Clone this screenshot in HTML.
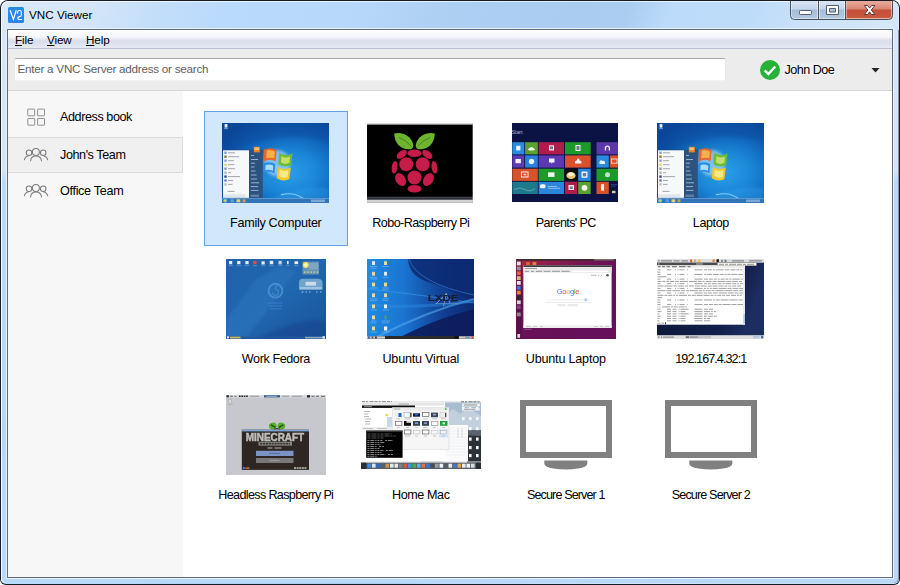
<!DOCTYPE html>
<html lang="en">
<head>
<meta charset="utf-8">
<title>VNC Viewer</title>
<style>
*{box-sizing:border-box;margin:0;padding:0}
html,body{width:900px;height:585px;overflow:hidden;background:#fff}
body{font-family:"Liberation Sans",sans-serif;color:#000;position:relative}
.abs{position:absolute}
#win{position:absolute;left:0;top:0;width:900px;height:585px;border-radius:8px 8px 6px 6px;background:#151c25;overflow:hidden}
#frame{position:absolute;left:1px;top:1px;width:898px;height:583px;border-radius:7px 7px 5px 5px;
 background:linear-gradient(112deg,#dbe9f8 0px,#d6e6f8 80px,#c3def9 150px,#badafb 210px,#b7d8fa 330px,#adcff2 420px,#a9ccf0 540px,#aacdf0 585px,#bcdbfa 625px,#bddcfa 700px,#cde2f8 760px,#d4e6f8 830px,#c9dff6 898px);
 box-shadow:inset 1px 1px 0 0 rgba(255,255,255,.7),inset -1px 0 0 0 rgba(255,255,255,.35)}
#lowframe{position:absolute;left:2px;top:30px;width:896px;height:553px;border-radius:0 0 4px 4px;
 background:linear-gradient(180deg,#d6e6f8 0,#d3e4f7 140px,#b9d9fb 152px,#b7d7f9 400px,#b9d9fb 553px)}
#lowframe:before{content:"";position:absolute;left:-1px;top:0;width:898px;height:553px;border-radius:0 0 5px 5px;box-shadow:inset 1px 0 0 0 rgba(255,255,255,.75),inset -1px 0 0 0 rgba(30,40,55,.45)}
#inner-hl{position:absolute;left:6px;top:28px;width:888px;height:551px;background:#eaf3fc;border-radius:1px}
#inner-bd{position:absolute;left:7px;top:29px;width:886px;height:549px;background:#5c6b7b}
#client{position:absolute;left:8px;top:30px;width:884px;height:547px;background:#fff;overflow:hidden}
#title{position:absolute;left:29px;top:6px;font-size:11.7px;line-height:18px;white-space:nowrap;letter-spacing:0}
#appicon{position:absolute;left:8px;top:7px;width:16px;height:16px}
#menubar{position:absolute;left:0;top:0;width:884px;height:19px;
 background:linear-gradient(180deg,#ffffff 0,#f4f6fb 7px,#e6e9f3 9px,#d9deec 11px,#dde2ef 14px,#e6eaf5 18px,#b9bfce 18px,#b9bfce 19px)}
.menu{position:absolute;top:2px;font-size:11.7px;line-height:16px;white-space:nowrap;letter-spacing:-.12px}
.menu u{text-decoration:underline;text-underline-offset:1px}
#toolbar{position:absolute;left:0;top:19px;width:884px;height:42px;background:#ececec;border-bottom:1px solid #d6d6d6}
#search{position:absolute;left:6px;top:9px;width:712px;height:23px;background:#fff;border:1px solid #e6e6e6;border-top-color:#ababab;border-bottom-color:#f2f2f2;border-radius:2.5px}
#search span{position:absolute;left:2.5px;top:2px;font-size:11.7px;line-height:16px;color:#5e5e5e;white-space:nowrap;letter-spacing:-.26px}
#sidebar{position:absolute;left:0;top:61px;width:175px;height:486px;background:#f7f7f7}
.sel{position:absolute;left:0;top:46px;width:175px;height:36px;background:#f0f0f0;border:1px solid #dadada;border-left:none}
.sbt{position:absolute;left:52px;font-size:12.6px;line-height:18px;white-space:nowrap;letter-spacing:-.42px}
.lbl{position:absolute;font-size:12.6px;line-height:18px;white-space:nowrap;text-align:center;width:145px;letter-spacing:-.42px}
</style>
</head>
<body>
<div id="win">
 <div id="frame"></div>
 <div id="lowframe"></div>
 <div id="inner-hl"></div>
 <div id="inner-bd"></div>
 <svg id="appicon" viewBox="8 7 16 16"><rect x="8" y="7" width="16" height="16" rx="1.600" fill="#2a86e8"/><path d="M10.100 10.300L13.350 19.400L16.300 10.300" fill="none" stroke="#fff" stroke-width="1.200" stroke-linejoin="miter"/><path d="M17.600 13.700V12.400A1.900 1.900 0 0 1 21.400 12.400V15Q21.400 16.300 19.600 16.600Q17.700 17 17.700 18.100Q17.800 19.500 19.700 19.500H21.900" fill="none" stroke="#fff" stroke-width="1.100"/></svg>
 <div id="title">VNC Viewer</div>
 <svg class="abs" style="left:789px;top:0" width="105" height="22" viewBox="789 0 105 22">
  <defs>
   <linearGradient id="gb" x1="0" y1="0" x2="0" y2="1"><stop offset="0" stop-color="#dbe7f5"/><stop offset=".47" stop-color="#c3d5ea"/><stop offset=".48" stop-color="#a4bcd7"/><stop offset="1" stop-color="#b4cbe4"/></linearGradient>
   <linearGradient id="gr" x1="0" y1="0" x2="0" y2="1"><stop offset="0" stop-color="#eab0a3"/><stop offset=".47" stop-color="#d98472"/><stop offset=".48" stop-color="#c5503a"/><stop offset=".85" stop-color="#c9553c"/><stop offset="1" stop-color="#d98a6a"/></linearGradient>
   <clipPath id="cc"><path d="M790.5 1V15.5Q790.5 19.5 794.5 19.5H888.5Q892.5 19.5 892.5 15.5V1Z"/></clipPath>
  </defs>
  <g clip-path="url(#cc)">
   <rect x="790" y="0" width="29" height="20" fill="url(#gb)"/>
   <rect x="819" y="0" width="27" height="20" fill="url(#gb)"/>
   <rect x="846" y="0" width="47" height="20" fill="url(#gr)"/>
  </g>
  <path d="M790.5 1V15.5Q790.5 19.5 794.5 19.5H888.5Q892.5 19.5 892.5 15.5V1" fill="none" stroke="#46525f" stroke-width="1"/>
  <path d="M791.5 1V15.5Q791.5 18.5 794.5 18.5H888.5Q891.5 18.5 891.5 15.5V1" fill="none" stroke="#fff" stroke-opacity=".45" stroke-width="1"/>
  <path d="M818.5 1V19M845.5 1V19" stroke="#46525f" stroke-width="1"/>
  <path d="M819.5 1V18.5M817.5 1V18.5M844.5 1V18.5" stroke="#fff" stroke-opacity=".5" stroke-width="1"/>
  <path d="M846.5 1V18.5" stroke="#f3c6bb" stroke-opacity=".6" stroke-width="1"/>
  <rect x="799.5" y="10.500" width="12" height="4" rx=".8" fill="#fff" stroke="#54606e" stroke-width="1"/>
  <path d="M826.5 5.500h12v9h-12zM829.500 8.500v3.500h6V8.500z" fill="#fff" fill-rule="evenodd" stroke="#54606e" stroke-width="1" stroke-linejoin="round"/>
  <path d="M864.3 5.500h3.300l2 2.600 2-2.600h3.300l-3.600 4.500 3.600 4.500h-3.300l-2-2.600-2 2.600h-3.300l3.600-4.500z" fill="#fff" stroke="#5a3a38" stroke-width="1" stroke-linejoin="round"/>
 </svg>
 <div id="client">
  <div id="menubar">
   <span class="menu" style="left:7px"><u>F</u>ile</span>
   <span class="menu" style="left:39px"><u>V</u>iew</span>
   <span class="menu" style="left:78px"><u>H</u>elp</span>
  </div>
  <div id="toolbar">
   <div id="search"><span>Enter a VNC Server address or search</span></div>
   <svg class="abs" style="left:750px;top:9px" width="134" height="24" viewBox="758 58 134 24">
    <rect x="783.500" y="63.500" width="51.500" height="11.500" fill="#f1f1f1"/><circle cx="770" cy="70" r="10" fill="#25b236"/>
    <path d="M764.700 70.400l3.700 3.700 6.900-7.600" fill="none" stroke="#fff" stroke-width="2.350" stroke-linecap="butt" stroke-linejoin="miter"/>
    <path d="M871.500 68h8l-4 4.600z" fill="#222"/>
   </svg>
   <span class="abs" id="uname" style="left:776.4px;top:12px;font-size:12.6px;line-height:18px;white-space:nowrap;letter-spacing:-.5px">John Doe</span>
  </div>
  <div id="sidebar">
   <div class="sel"></div>
   <svg class="abs" style="left:12px;top:12px" width="40" height="100" viewBox="20 103 40 100" fill="none">
    <g stroke="#919191" stroke-width="1">
     <rect x="27.800" y="109.100" width="6.900" height="6.700" rx=".4"/><rect x="37.600" y="109.100" width="6.900" height="6.700" rx=".4"/>
     <rect x="27.800" y="118.500" width="6.900" height="6.700" rx=".4"/><rect x="37.600" y="118.500" width="6.900" height="6.700" rx=".4"/>
    </g>
    <g id="ppl" stroke="#7c7c7c" stroke-width="1.050" stroke-linecap="round">
     <circle cx="35.900" cy="152" r="3.450"/>
     <circle cx="29" cy="152.800" r="2.750"/>
     <circle cx="43.200" cy="152.800" r="2.750"/>
     <path d="M30.600 161Q31 156 35.900 156Q40.800 156 41.600 161"/>
     <path d="M24.400 159.800Q25.200 156.200 28.600 155.700"/>
     <path d="M43.400 155.700Q46.800 156.200 47.700 159.800"/>
    </g>
    <use href="#ppl" y="36"/>
   </svg>
   <span class="sbt" style="top:17px">Address book</span>
   <span class="sbt" style="top:55px">John's Team</span>
   <span class="sbt" style="top:91px;letter-spacing:-.31px">Office Team</span>
  </div>
  <div class="abs" style="left:196px;top:81px;width:144px;height:135px;background:#d0e7fc;border:1px solid #62a3e5"></div>
  <svg class="abs" id="art" style="left:-8px;top:-30px" width="900" height="585" viewBox="0 0 900 585">
   <defs>
    <radialGradient id="w7bg" cx=".63" cy=".62" r=".74"><stop offset="0" stop-color="#2b9fe8"/><stop offset=".35" stop-color="#1b86d6"/><stop offset=".7" stop-color="#0e5db2"/><stop offset="1" stop-color="#0a4594"/></radialGradient>
    <filter id="b1" x="-10%" y="-10%" width="120%" height="120%"><feGaussianBlur stdDeviation=".35"/></filter>
    <filter id="b2" x="-30%" y="-30%" width="160%" height="160%"><feGaussianBlur stdDeviation="1.600"/></filter>
    <filter id="b3" x="-30%" y="-30%" width="160%" height="160%"><feGaussianBlur stdDeviation=".7"/></filter>
    <linearGradient id="fedbg" x1="0" y1="0" x2="1" y2="1"><stop offset="0" stop-color="#1e62ab"/><stop offset=".5" stop-color="#2067b0"/><stop offset="1" stop-color="#195299"/></linearGradient>
    <linearGradient id="lxbg" x1="0" y1="0" x2="1" y2="0"><stop offset="0" stop-color="#1f8be3"/><stop offset=".35" stop-color="#1a74d0"/><stop offset=".7" stop-color="#123f93"/><stop offset="1" stop-color="#0c2a72"/></linearGradient>
    <linearGradient id="ubbg" x1="0" y1="0" x2=".6" y2="1"><stop offset="0" stop-color="#b02a3c"/><stop offset=".18" stop-color="#8e1c4c"/><stop offset=".4" stop-color="#6c1257"/><stop offset="1" stop-color="#651058"/></linearGradient>
    <linearGradient id="gnbg" x1="0" y1="0" x2="1" y2=".3"><stop offset="0" stop-color="#0c1633"/><stop offset=".8" stop-color="#12204a"/><stop offset="1" stop-color="#1c2e60"/></linearGradient>
    <pattern id="termlines" x="0" y="9.200" width="88" height="4.800" patternUnits="userSpaceOnUse">
      <path d="M.5 .9h4M9.500 .9h4.500M17.500 .9h9M36 .9h37M74.500 .9h12" stroke="#9c9c9c" stroke-width=".8"/>
      <path d="M.5 3.300h3" stroke="#a8a8a8" stroke-width=".9"/>
    </pattern>
    <pattern id="termlines2" x="0" y="0" width="88" height="2.400" patternUnits="userSpaceOnUse">
      <path d="M.5 .9h3.500M10 .9h4M15 .9h5M22 .9h9M37 .9h8M47 .9h14" stroke="#8a8a8a" stroke-width=".9"/>
    </pattern>
    <clipPath id="c100"><rect width="100" height="80"/></clipPath><clipPath id="c107"><rect width="107" height="80"/></clipPath><clipPath id="c106"><rect width="106" height="79.600"/></clipPath><clipPath id="c120"><rect width="120" height="68"/></clipPath>
    <!--DEFS-->
    <symbol id="win7" viewBox="0 0 107 80" width="107" height="80">
     <rect width="107" height="80" fill="url(#w7bg)"/>
     <path d="M0 0H107V18Q60 6 0 30Z" fill="#0a4a9c" opacity=".35" filter="url(#b2)"/>
     <path d="M59 71.800Q70 69.300 77 73T86.500 80" fill="none" stroke="#c9e8ff" stroke-opacity=".85" stroke-width="1.100"/>
     <path d="M40 80Q80 60 107 66V80Z" fill="#2ea6ee" opacity=".35" filter="url(#b2)"/>
     <!-- logo glow -->
     <ellipse cx="55" cy="40" rx="13" ry="13" fill="#cfeaff" opacity=".55" filter="url(#b2)"/>
     <g filter="url(#b1)" transform="translate(55.500 41.500) scale(1.130) translate(-55.500 -40.500)">
      <path d="M43.500 27.500Q49 24.500 54.600 27.800L53.800 37.600Q48.500 35 43 37.800Z" fill="#e9642c"/>
      <path d="M46 28Q50 27 53.200 29L52.700 35Q49 33.800 45.600 35.300Z" fill="#f7b04a"/>
      <path d="M57 30Q62.500 34 68.800 30.500L67.600 41Q62 44 56.200 40.200Z" fill="#6cbb3a"/>
      <path d="M59 33Q62.500 35.500 66.500 33.500L66 39Q62.500 41 58.600 38.800Z" fill="#c5e06a"/>
      <path d="M42.800 39.800Q48 37 53.500 40L52.800 48.200Q48 45.500 42.400 47.600Z" fill="#2b8de2"/>
      <path d="M45 41Q48.500 39.800 51.800 41.600L51.400 46Q48 44.500 44.700 45.500Z" fill="#a8defc"/>
      <path d="M55.800 42.500Q61 46 67.200 43.200L66 53.600Q60.500 56 54.800 52.600Z" fill="#f3c92c"/>
      <path d="M57.600 45Q61 47 65 45.600L64.500 51.500Q61 53 57 51Z" fill="#fae98a"/>
     </g>
     <!-- start menu -->
     <rect x=".5" y="26.500" width="40.300" height="49" fill="#27476e" opacity=".55"/>
     <rect x="27" y="27" width="13.500" height="48.200" fill="#2f5079" opacity=".8"/>
     <rect x="1" y="27.300" width="26" height="47.500" fill="#f6f8fa"/>
     <rect x="1.500" y="71.200" width="22" height="2.800" fill="#dfe6ee"/>
     <rect x="31.800" y="23.800" width="6" height="5.600" fill="#e8862c"/><rect x="32.600" y="24.500" width="4.400" height="2.500" fill="#f4c06a"/>
     <g fill="#5a83b5"><rect x="2.300" y="28.600" width="2.400" height="2.400" fill="#7fa2c8"/><rect x="2.300" y="32.500" width="2.400" height="2.400" fill="#8a7a3a"/><rect x="2.300" y="36.500" width="2.400" height="2.400" fill="#8aa0d0"/><rect x="2.300" y="40.500" width="2.400" height="2.400" fill="#d8d878"/><rect x="2.300" y="44.500" width="2.400" height="2.400" fill="#8a98a8"/><rect x="2.300" y="48.500" width="2.400" height="2.400" fill="#a8b8c8"/><rect x="2.300" y="52.400" width="2.400" height="2.400" fill="#3a4a8a"/><rect x="2.300" y="56.300" width="2.400" height="2.400" fill="#6a7ad0"/><rect x="2.300" y="60.200" width="2.400" height="2.400" fill="#b8c0c8"/></g>
     <g stroke="#8b8f96" stroke-width=".8"><path d="M6 29.800h7M6 33.700h11M6 37.700h6M6 41.700h6.500M6 45.700h7M6 49.700h3M6 53.600h12M6 57.500h5M6 61.400h4.500M5.500 68.400h7"/></g>
     <g stroke="#cfe0f2" stroke-width=".8" opacity=".85"><path d="M29 32.500h3M29 36.500h7M29 40.200h4M29 44h3.500M29 48h4.500M29 52h5.500M29 56h6M29 59.800h8M29 63.600h7M29 67.400h7.500"/></g>
     <rect x="28.500" y="71.500" width="8.500" height="2.600" fill="#5d7ea6"/>
     <!-- taskbar -->
     <rect x="0" y="75.300" width="107" height="4.700" fill="#3274b8"/>
     <rect x="0" y="75.300" width="107" height=".6" fill="#8bbbe6" opacity=".8"/>
     <circle cx="3.200" cy="77.700" r="2.100" fill="#5fb0d8"/><circle cx="3.200" cy="77.700" r="1.100" fill="#e8d84a"/>
     <rect x="8.500" y="76.300" width="3.400" height="3" fill="#5aa0e0"/><rect x="14.500" y="76.300" width="3.800" height="3" fill="#e8d070"/><rect x="20.500" y="76.300" width="3" height="3" fill="#c8a050"/>
     <rect x="89" y="76.500" width="14" height="2.600" fill="#9ac0e4" opacity=".7"/>
     <rect x="2.600" y="1" width="2.800" height="3.600" fill="#dfeaf5"/><rect x="2" y="5.300" width="4" height=".8" fill="#cfe0f0" opacity=".7"/>
    </symbol>
   </defs>
   <use href="#win7" x="222" y="123"/>
   <use href="#win7" x="657" y="123"/>
   <!-- Raspberry Pi -->
   <g transform="translate(367,123)" clip-path="url(#c106)">
    <rect width="106" height="79.600" fill="#000"/>
    <rect width="106" height="1.600" fill="#d9dadb"/>
    <rect y="73.700" width="106" height="3.100" fill="#2e3238"/><rect y="74.300" width="106" height=".7" fill="#454a52"/><rect y="76.700" width="106" height="2.900" fill="#d2d3d4"/>
    <rect x="105.300" y="0" width=".7" height="80" fill="#bbb" opacity=".6"/>
    <g filter="url(#b1)">
     <g fill="#6db52e">
      <path d="M27.200 10.600C34 8.800 43.500 11.500 46.200 21.500C46.500 23.800 45.500 25.600 43.800 26.200C35 27.200 27.500 21.500 27.200 10.600Z"/>
      <path d="M67.800 10.600C61 8.800 51.500 11.500 48.800 21.500C48.500 23.800 49.500 25.600 51.200 26.200C60 27.200 67.500 21.500 67.800 10.600Z"/>
     </g>
     <path d="M32 14.500Q39 17 44.500 23.500M63 14.500Q56 17 50.500 23.500" stroke="#3b7a18" stroke-width=".8" fill="none"/>
     <g fill="#c51a4a">
      <ellipse cx="47.500" cy="30.200" rx="6.900" ry="3.800"/>
      <ellipse cx="34.700" cy="31.400" rx="5.900" ry="3.400" transform="rotate(-38 34.700 31.400)"/>
      <ellipse cx="60.300" cy="31.400" rx="5.900" ry="3.400" transform="rotate(38 60.300 31.400)"/>
      <circle cx="39.300" cy="41.300" r="7"/>
      <circle cx="55.700" cy="41.300" r="7"/>
      <ellipse cx="27.600" cy="44.300" rx="2.900" ry="6.300" transform="rotate(8 27.600 44.300)"/>
      <ellipse cx="67.400" cy="44.300" rx="2.900" ry="6.300" transform="rotate(-8 67.400 44.300)"/>
      <circle cx="47.500" cy="54.500" r="7"/>
      <ellipse cx="33.600" cy="56.600" rx="4.800" ry="7" transform="rotate(-32 33.600 56.600)"/>
      <ellipse cx="61.400" cy="56.600" rx="4.800" ry="7" transform="rotate(32 61.400 56.600)"/>
      <ellipse cx="47.500" cy="65.800" rx="7" ry="3.800"/>
     </g>
    </g>
   </g>
   <!-- Windows 8 -->
   <g transform="translate(512,123)" clip-path="url(#c106)">
    <rect width="106" height="79" fill="#0b1244"/>
    <text x="-.6" y="10.700" font-family="Liberation Sans, sans-serif" font-size="5.700" fill="#a3a9c8" letter-spacing="-.2">Start</text>
    <g filter="url(#b1)">
     <!-- row1 -->
     <rect x=".3" y="19.200" width="12" height="12.200" fill="#2b8bdc"/><rect x="13.100" y="19.200" width="12.700" height="12.200" fill="#58a22e"/>
     <rect x="26.600" y="19.200" width="25.400" height="12.200" fill="#b01e4c"/><rect x="53" y="19.200" width="25.700" height="12.200" fill="#1f9a2c"/>
     <rect x="84.500" y="19.200" width="21.500" height="12.200" fill="#5b37ab"/>
     <!-- row2 -->
     <rect x=".3" y="32.400" width="12" height="12.200" fill="#5b3ab4"/><rect x="13.100" y="32.400" width="12.700" height="12.200" fill="#2b80da"/>
     <rect x="26.600" y="32.400" width="25.400" height="12.200" fill="#5c38b2"/><rect x="53" y="32.400" width="25.700" height="12.200" fill="#d9512b"/>
     <rect x="84.500" y="32.400" width="12.300" height="12.200" fill="#2b8bdc"/><rect x="97.700" y="32.400" width="8.300" height="12.200" fill="#d9512b"/>
     <!-- row3 -->
     <rect x=".3" y="45.700" width="25.500" height="12.200" fill="#d7532a"/><rect x="26.600" y="45.700" width="25.400" height="12.200" fill="#1f9a2c"/>
     <rect x="53" y="45.700" width="12.300" height="12.200" fill="#0a0a0a"/><rect x="66.200" y="45.700" width="12.500" height="12.200" fill="#2b86da"/>
     <rect x="84.500" y="45.700" width="21.500" height="12.200" fill="#1f9a2c"/>
     <!-- row4 -->
     <rect x=".3" y="58.800" width="25.500" height="12.200" fill="#1f7a8c"/><rect x="26.600" y="58.800" width="25.400" height="12.200" fill="#2b86da"/>
     <rect x="53" y="58.800" width="12.300" height="12.200" fill="#b01e4c"/><rect x="66.200" y="58.800" width="12.500" height="12.200" fill="#58a22e"/>
     <rect x="84.500" y="58.800" width="12.300" height="12.200" fill="#d9512b"/>
     <!-- icons -->
     <g fill="#fff" opacity=".92">
      <rect x="4.200" y="22.800" width="4.200" height="4.600"/><path d="M16 26.500q3.500-5 7 0l-1.200 1h-4.600z"/>
      <rect x="37" y="22.300" width="5" height="5.200"/><rect x="63.500" y="22" width="5" height="6"/>
      <path d="M92.800 27.500v-2.500a2.600 2.600 0 0 1 5.200 0v2.500h-1.300v-2.500a1.300 1.300 0 0 0-2.600 0v2.500z"/>
      <rect x="3.500" y="36" width="5.400" height="4.200"/><circle cx="19.500" cy="38.500" r="2.700"/>
      <path d="M37 35.500h5.500v4h-2l-1 1.400v-1.400H37z"/><path d="M63 40.500v-2.200l2-1v-1.500h2.400v1.500l2 1v2.200z"/>
      <path d="M87.500 41v-2.200q1.500-2.500 3-.8q2-1 2.500 1.200v1.800z"/><rect x="99.500" y="36" width="5.500" height="4.200" fill="none" stroke="#fff" stroke-width=".8"/>
      <rect x="9.500" y="49" width="6.500" height="5" fill="none" stroke="#fff" stroke-width="1"/><rect x="11.800" y="50.800" width="2" height="1.500"/>
      <rect x="36" y="49.400" width="6.500" height="4.500"/><rect x="69.500" y="48.500" width="6" height="6.300" rx="1"/>
      <circle cx="95.500" cy="51.800" r="2.500" opacity=".8"/>
      <rect x="28" y="61.200" width="5.500" height="4" rx="1.500"/><path d="M36 63.500h9M36 65.300h12" stroke="#fff" stroke-width=".7" opacity=".7"/>
      <rect x="56.500" y="62" width="5.500" height="5"/><circle cx="72.500" cy="64.800" r="2.900"/>
      <rect x="89" y="61.200" width="3" height="6.500"/><rect x="100" y="67.800" width="3.500" height="2.400" fill="#e8e0a0"/>
     </g>
     <g fill="#0b1244" opacity=".55"><rect x="38" y="23.300" width="3" height="3"/><rect x="64.500" y="23" width="3" height="4"/><rect x="70.800" y="50" width="3.400" height="3.400"/><rect x="57.800" y="63.500" width="3" height="2.500"/></g>
     <ellipse cx="59" cy="52.500" rx="4.600" ry="3.600" fill="#e8c878"/><ellipse cx="59" cy="51.300" rx="3" ry="1.800" fill="#fff3c8"/>
     <path d="M2 66.500q6-3 11 0t10-1" stroke="#8fb8c0" stroke-width="1" fill="none" opacity=".6"/>
     <path d="M99 61.500h6M99 63.200h5" stroke="#3a5ab0" stroke-width=".6"/>
    </g>
   </g>
   <!-- Work Fedora -->
   <g transform="translate(226,259)" clip-path="url(#c100)">
    <rect width="100" height="80" fill="url(#fedbg)"/>
    <path d="M0 62L30 20L52 8L70 12L20 80H0Z" fill="#3a86cc" opacity=".28" filter="url(#b2)"/>
    <path d="M30 80Q70 58 100 62V80Z" fill="#123f8a" opacity=".45" filter="url(#b2)"/>
    <circle cx="49.500" cy="31.700" r="6.900" fill="none" stroke="#4a92d2" stroke-width="1.900" opacity=".9"/>
    <path d="M46.500 33.500a3 3 0 1 0 3-3.200M49.500 30.300v-1.500a2.600 2.600 0 0 1 2.600-2.600" fill="none" stroke="#3f88cb" stroke-width="1.200" opacity=".9"/>
    <path d="M42.500 44h14M43 47h13M44 49.800h11" stroke="#4a8fcf" stroke-width="1" opacity=".6"/>
    <g filter="url(#b1)">
     <g fill="#e8eef6"><rect x="3" y="2" width="3.200" height="3.200"/><rect x="11.200" y="2" width="3.200" height="3.200"/><rect x="19.400" y="2" width="3.200" height="3.200"/><rect x="27.300" y="2" width="3.200" height="3.200" fill="#e8503a"/><rect x="35.500" y="2.300" width="3.200" height="3.200"/><rect x="43.800" y="1.800" width="3.400" height="3.400"/><rect x="52.500" y="1.800" width="3.200" height="3.600" fill="#c8d4e4"/><rect x="61" y="2" width="1.600" height="3.200"/><rect x="68.500" y="2.300" width="3.600" height="2.800"/></g>
     <path d="M2.500 6.700h4.500M10.500 6.700h5M18.500 6.700h5M27 6.700h4M35 6.700h4.500M43 6.700h5M52 6.700h4.500M60 6.700h3.500M68 6.700h4.500" stroke="#7fa8d8" stroke-width=".7" opacity=".8"/>
     <rect x="76.500" y="2.400" width="16.500" height="13" rx=".8" fill="#6a93b3"/><rect x="83" y="4" width="9" height="6.500" fill="#7fa6c0"/>
     <circle cx="79.800" cy="6" r="3" fill="#f0e070"/><circle cx="79.800" cy="6" r="1.700" fill="#fff6b0"/>
     <path d="M78 13.200h14" stroke="#d8e090" stroke-width="1.300" stroke-dasharray="1.500 1.700"/>
     <path d="M73 24Q73 19.800 77 19.800H91.500Q96.500 19.800 96.500 24V30.800H73Z" fill="#6fa4cb"/>
     <rect x="79.500" y="22.800" width="10.500" height="3.800" fill="#c9dcea"/><rect x="73.800" y="28" width="22" height="2.300" fill="#9cc2de"/>
     <path d="M75.500 33h2M79.500 33h1.500M83 33h1.500M90 33h1.500M94 33h1.500" stroke="#9cc4e8" stroke-width="1.100"/>
     <rect x="0" y="77.600" width="100" height="2.400" fill="#24579f"/>
     <rect x="1" y="77.300" width="2" height="2.200" fill="#e8e8f0"/><rect x="4" y="77.600" width="10.500" height="1.900" fill="#c9b45a"/>
     <rect x="79" y="77.800" width="19" height="1.600" fill="#8fa8b8"/><rect x="96.500" y="77.200" width="2.500" height="2.500" fill="#e6e6da"/>
    </g>
   </g>
   <!-- Ubuntu Virtual / LXDE -->
   <g transform="translate(367,259)" clip-path="url(#c107)">
    <rect width="107" height="80" fill="url(#lxbg)"/>
    <path d="M41 0H107V44Q86 30 64 24T41 0Z" fill="#0b2a73" opacity=".85" filter="url(#b3)"/>
    <path d="M30 80Q62 62 107 50V80Z" fill="#0a1f5c" opacity=".9" filter="url(#b3)"/>
    <path d="M0 30Q40 34 107 44" stroke="#4aa6f0" stroke-width="1.200" fill="none" opacity=".5" filter="url(#b3)"/>
    <path d="M10 78Q60 52 107 40" stroke="#58b0f4" stroke-width="2" fill="none" opacity=".55" filter="url(#b3)"/>
    <path d="M0 46Q50 50 107 42" stroke="#2d8fe6" stroke-width="3" fill="none" opacity=".45" filter="url(#b3)"/>
    <path d="M42 0Q50 24 107 36" stroke="#3c8fe0" stroke-width="1" fill="none" opacity=".55" filter="url(#b3)"/>
    <g filter="url(#b1)">
     <g fill="#e9d79a"><rect x="5" y="2.200" width="3" height="3.800" fill="#e8e8ee"/><rect x="17" y="2.200" width="3" height="3.800"/><rect x="5" y="12.800" width="3" height="3.800"/><rect x="17" y="12.800" width="3" height="3.800" fill="#ece6e0"/><rect x="5" y="23.600" width="3" height="3.800"/><rect x="17" y="23.600" width="3" height="3.800"/><rect x="5" y="34.400" width="3" height="3.800"/><rect x="17" y="34.400" width="3" height="3.800"/><rect x="5" y="45.500" width="3" height="3.800"/><rect x="17" y="45.500" width="3" height="3.800" fill="#f0f0f0"/><rect x="5" y="56.500" width="3" height="3.800"/><rect x="17.600" y="56.500" width="1.800" height="3.800" fill="#4aa84a"/><rect x="5" y="67.500" width="3" height="3.800"/><rect x="17" y="67.500" width="3.200" height="4" fill="#f4f4f4"/></g>
     <g stroke="#7fb6ea" stroke-width=".8" opacity=".75"><path d="M3 7.500h7M3.500 9.200h6M15 7.500h7M3 18.300h7M3 20h7.500M15.500 18.300h6M3 29h7.500M15 29h7M15.500 30.800h6M3 39.900h7.500M3 41.600h7.500M15 39.900h7M15.500 41.600h6M4 51h6M15.500 51h6.500M4 62h5.500M3.500 63.800h6M14.500 62h8.500M15 63.800h7M3.500 73h7M14.500 73h8"/></g>
     <path d="M69 45L79.300 34.500L82.800 44" fill="none" stroke="#c8d4e6" stroke-width=".7" opacity=".8"/><path d="M76.500 47.500L79.300 34.500" stroke="#e0e8f4" stroke-width=".6" opacity=".7"/>
     <text x="60.800" y="41.800" font-family="Liberation Sans, sans-serif" font-weight="bold" font-size="9.400" fill="#151a2c" textLength="30.500" lengthAdjust="spacingAndGlyphs">LXDE</text>
     <path d="M68 44.500h24.500" stroke="#8aa0c8" stroke-width=".6" opacity=".7"/>
     <rect x="0" y="77" width="107" height="3" fill="#2b2b2b"/><rect x="0" y="77.300" width="18" height="2.400" fill="#cfd3d8"/><rect x="1" y="77.500" width="1.800" height="2" fill="#2b5aa8"/><rect x="4.500" y="77.500" width="1.800" height="2" fill="#555"/><rect x="8" y="77.500" width="1.800" height="2" fill="#333"/>
     <rect x="92" y="77.300" width="15" height="2.400" fill="#c9ced6"/><rect x="87.500" y="77.200" width="3.600" height="2.600" fill="#111"/><rect x="104.500" y="77.500" width="2" height="2" fill="#d83a2a"/><rect x="98" y="77.600" width="5" height="1.800" fill="#7f90b0"/>
    </g>
   </g>
   <!-- Ubuntu Laptop -->
   <g transform="translate(516,259)" clip-path="url(#c100)">
    <rect width="100" height="80" fill="url(#ubbg)"/>
    <rect width="100" height="1.700" fill="#3b2b30"/><rect x="78" y=".2" width="20" height="1.200" fill="#cfc6c2" opacity=".55"/>
    <rect x="0" y="1.700" width="5.800" height="78.300" fill="#4c0f40" opacity=".55"/>
    <g filter="url(#b1)">
     <g><rect x=".9" y="2.600" width="3.800" height="3.800" fill="#e8e0e4"/><rect x=".9" y="7.500" width="3.800" height="3.800" fill="#8a9aa0"/><rect x=".9" y="12.300" width="3.800" height="3.800" fill="#e8623a"/><rect x=".9" y="17.200" width="3.800" height="3.800" fill="#d8c06a"/><rect x=".9" y="22" width="3.800" height="3.800" fill="#e8e8ee"/><rect x=".9" y="26.900" width="3.800" height="3.800" fill="#3a7ad8"/><rect x=".9" y="31.700" width="3.800" height="3.800" fill="#e8862a"/><rect x=".9" y="36.600" width="3.800" height="3.800" fill="#2a2a2a"/><rect x=".9" y="41.400" width="3.800" height="3.800" fill="#d8d8dc"/><rect x=".9" y="46.300" width="3.800" height="3.800" fill="#7a4a80"/><rect x=".9" y="53.500" width="3.800" height="3.800" fill="#8a8a8a"/><rect x="1.300" y="75" width="2.800" height="3.800" fill="#d8d4d8"/></g>
     <rect x="10" y="3" width="3.800" height="3" fill="#e85a2a"/><rect x="16.500" y="3" width="3.800" height="3" fill="#d8823a"/>
     <rect x="7.400" y="6.300" width="88.200" height="62.600" fill="#fff"/>
     <rect x="7.400" y="6.300" width="88.200" height="1.700" fill="#3e3a3c"/>
     <rect x="7.400" y="8" width="88.200" height="5.800" fill="#e9e9ea"/><rect x="8" y="8.200" width="16" height="2.400" fill="#f7f7f7"/>
     <path d="M9 9.400h12" stroke="#777" stroke-width=".8"/><path d="M9 12.300h4M15 12.300h3M20 12.300h6M27.500 12.300h7M36 12.300h8M45.500 12.300h8" stroke="#8a8a8a" stroke-width=".9"/><path d="M56 12.300h36" stroke="#fff" stroke-width="1.600"/>
     <path d="M75 16.300h5.500M82 16.300h1.200M85 16.300h1.200" stroke="#999" stroke-width=".7"/><circle cx="91.500" cy="16.300" r="1.300" fill="#555"/>
     <path d="M32 41h42" stroke="#e3e6ec" stroke-width=".7"/><path d="M29 43.500h46" stroke="#dfe3ea" stroke-width=".7"/><rect x="68.500" y="39.500" width="2.400" height="2.600" fill="#a8c4f0"/>
     <rect x="41.500" y="45" width="8" height="2.300" fill="#e9e9e9"/><rect x="51.500" y="45" width="10.500" height="2.300" fill="#e9e9e9"/>
     <rect x="7.400" y="66.300" width="88.200" height="2.600" fill="#f0f0f0"/><path d="M10 67.600h5M17 67.600h4M24 67.600h3M78 67.600h4M84 67.600h3M89 67.600h4" stroke="#bbb" stroke-width=".7"/>
     <path d="M8 70.300h7.500" stroke="#b890b0" stroke-width=".7" opacity=".7"/>
    </g>
    <text y="34.800" font-family="Liberation Sans, sans-serif" font-size="7.600" letter-spacing="-.35" filter="url(#b1)"><tspan x="40.700" fill="#3f7fe8">G</tspan><tspan fill="#e04a3a">o</tspan><tspan fill="#f0b41e">o</tspan><tspan fill="#3f7fe8">g</tspan><tspan fill="#35a653">l</tspan><tspan fill="#e04a3a">e</tspan></text>
   </g>
   <!-- 192.167.4.32:1 -->
   <g transform="translate(657,259)" clip-path="url(#c107)">
    <rect width="107" height="80" fill="url(#gnbg)"/>
    <g filter="url(#b1)">
     <rect width="107" height="3.700" fill="#dedfe0"/>
     <path d="M1 1.900h1.500M4 1.900h11M16.500 1.900h6M24.500 1.900h6.500M75 1.900h12M92 1.900h13" stroke="#6a6a6a" stroke-width=".9"/>
     <rect x="33" y=".5" width="2.200" height="2.700" fill="#d8622a"/><rect x="37" y=".5" width="2.200" height="2.700" fill="#c8b07a"/><rect x="41" y=".5" width="2.600" height="2.700" fill="#e8c84a"/><rect x="55.500" y=".5" width="2.200" height="2.700" fill="#e8823a"/><rect x="59.500" y=".3" width="2.400" height="3.100" fill="#111"/><rect x="64" y=".8" width="2" height="2.200" fill="#8a8a8a"/><rect x="67.500" y=".8" width="2" height="2.200" fill="#6a7a8a"/>
     <rect x="0" y="3.700" width="88" height="62" fill="#fff"/>
     <rect x="0" y="3.700" width="88" height="2.700" fill="#4b4b4b"/><path d="M39 5h7" stroke="#ddd" stroke-width=".8"/><rect x="1" y="4.300" width="1.400" height="1.400" fill="#aaa"/>
     <rect x="0" y="6.400" width="88" height="2.600" fill="#eeeeee"/><path d="M1 7.700h2.500M5 7.700h3M9.500 7.700h3.500M15 7.700h5M22 7.700h6.500M30.500 7.700h3" stroke="#555" stroke-width=".9"/>
     <rect x="60.500" y="3.800" width="39" height="2.900" fill="#fbfbf4" stroke="#777" stroke-width=".3"/><path d="M62 5.300h36" stroke="#777" stroke-width=".8" stroke-dasharray="5 1 3 1 7 1"/>
     <path d="M0.5 10.8h3M10 10.8h4.2M18 10.8h1M20.5 10.8h1M22.5 10.8h5M30 10.8h0.8M37.5 10.8h8M47 10.8h3M50.9 10.8h4M55.8 10.8h2M58.7 10.8h8M67.6 10.8h5M73.5 10.8h5M79.4 10.8h3M83.3 10.8h2M0.5 13.15h3M0.5 15.4h3M10 15.4h4.2M18 15.4h1M20.5 15.4h1M22.5 15.4h5M30 15.4h0.8M37.5 15.4h8M47 15.4h2M49.9 15.4h5M55.8 15.4h6M62.7 15.4h4M67.6 15.4h2M70.5 15.4h3M74.4 15.4h6M81.3 15.4h4.7M0.5 17.75h9M0.5 20.1h3M10 20.1h4.2M18 20.1h1M20.5 20.1h1M22.5 20.1h5M30 20.1h0.8M37.5 20.1h8M47 20.1h4M51.9 20.1h4M56.8 20.1h3M60.7 20.1h2M63.6 20.1h4M68.5 20.1h3M72.4 20.1h2M75.3 20.1h8M84.2 20.1h1.8M0.5 22.45h4M5.4 22.45h3M9.3 22.45h3M13.2 22.45h4M18.1 22.45h4M23 22.45h8M31.9 22.45h8M40.8 22.45h4M45.7 22.45h2M48.6 22.45h6M55.5 22.45h4M60.4 22.45h8M69.3 22.45h5M75.2 22.45h6M82.1 22.45h3M0.5 24.7h3M10 24.7h4.2M18 24.7h1M20.5 24.7h1M22.5 24.7h5M30 24.7h0.8M37.5 24.7h8M47 24.7h3M50.9 24.7h3M54.8 24.7h5M60.7 24.7h4M65.6 24.7h2M68.5 24.7h6M75.4 24.7h4M80.3 24.7h2M83.2 24.7h2.8M0.5 27.05h6M7.4 27.05h8M16.3 27.05h4M21.2 27.05h6M28.1 27.05h3M32 27.05h5M37.9 27.05h5M43.8 27.05h6M50.7 27.05h4M55.6 27.05h5M61.5 27.05h5M67.4 27.05h3M71.3 27.05h3M75.2 27.05h4M80.1 27.05h4M0.5 29.4h3M10 29.4h4.2M18 29.4h1M20.5 29.4h1M22.5 29.4h5M30 29.4h0.8M37.5 29.4h8M47 29.4h2M49.9 29.4h2M52.8 29.4h2M55.7 29.4h5M61.6 29.4h8M70.5 29.4h4M75.4 29.4h6M82.3 29.4h3.7M0.5 31.65h8M9.4 31.65h5M15.3 31.65h8M24.2 31.65h4M29.1 31.65h3M33 31.65h8M41.9 31.65h3M45.8 31.65h2M48.7 31.65h5M54.6 31.65h3M58.5 31.65h8M67.4 31.65h8M76.3 31.65h5M82.2 31.65h3.8M0.5 34h3M10 34h4.2M18 34h1M20.5 34h1M22.5 34h5M30 34h0.8M37.5 34h8M47 34h3M50.9 34h4M55.8 34h5M61.7 34h8M70.6 34h6M77.5 34h4M82.4 34h3.6M0.5 36.35h6M7.4 36.35h3M11.3 36.35h4M16.2 36.35h2M19.1 36.35h2M22 36.35h8M30.9 36.35h3M34.8 36.35h4M39.7 36.35h6M46.6 36.35h6M53.5 36.35h3M57.4 36.35h2M60.3 36.35h4M65.2 36.35h3M69.1 36.35h4M74 36.35h5M79.9 36.35h2M82.8 36.35h2M0.5 38.6h4.5M0.5 40.95h3M10 40.95h4.2M18 40.95h1M20.5 40.95h1M22.5 40.95h5M30 40.95h0.8M37.5 40.95h8M47 40.95h8M55.9 40.95h2M58.8 40.95h4M63.7 40.95h8M72.6 40.95h8M81.5 40.95h4M0.5 43.3h3M0.5 45.55h3M10 45.55h4.2M18 45.55h1M20.5 45.55h1M22.5 45.55h5M30 45.55h0.8M37.5 45.55h8M47 45.55h4M51.9 45.55h4M56.8 45.55h4M61.7 45.55h3M65.6 45.55h8M74.5 45.55h5M80.4 45.55h5.6M0.5 47.9h1M2.5 47.9h1M5 47.9h8M13.9 47.9h2M16.8 47.9h4M21.7 47.9h6M28.6 47.9h1.4M0.5 50.25h3M10 50.25h4M15.5 50.25h4M21.5 50.25h1M23.5 50.25h8M37.5 50.25h8M47 50.25h4M51.9 50.25h4.1M0.5 52.6h4M10 52.6h4M15.5 52.6h4M21.5 52.6h1M23.5 52.6h5M37.5 52.6h8M47 52.6h6M53.9 52.6h2M56.8 52.6h2.2M0.5 54.85h2M10 54.85h4M15.5 54.85h4M21.5 54.85h1M23.5 54.85h8M37.5 54.85h8M47 54.85h4M51.9 54.85h4M0.5 57.2h3M10 57.2h4M15.5 57.2h4M21.5 57.2h1M23.5 57.2h5M37.5 57.2h8M47 57.2h3M50.9 57.2h5M56.8 57.2h3M0.5 59.55h2M10 59.55h4M15.5 59.55h4M21.5 59.55h1M23.5 59.55h5M37.5 59.55h8M47 59.55h2M49.9 59.55h3.1M0.5 61.8h2M10 61.8h4M15.5 61.8h4M21.5 61.8h1M23.5 61.8h5M37.5 61.8h8M47 61.8h6M0.5 64.15h3M4.5 64.15h2.5" stroke="#8e8e8e" stroke-width=".85" fill="none"/>
     <rect x="8" y="63.300" width=".9" height="1.900" fill="#111"/>
     <rect x="86.300" y="9" width="1.700" height="56.700" fill="#e8e8e8"/><rect x="86.400" y="55" width="1.500" height="9.500" fill="#a9c4e4"/>
     <rect x="0" y="76.200" width="107" height="3.800" fill="#dedfe0"/><path d="M1 78.100h1.500M4 78.100h1" stroke="#555" stroke-width=".9"/><path d="M6 78.100h11" stroke="#777" stroke-width=".9"/><rect x="28" y="76.800" width="26" height="2.600" fill="#c2c4c8"/><path d="M29 78.100h3" stroke="#444" stroke-width="1.200"/><path d="M33 78.100h8" stroke="#777" stroke-width=".9"/>
     <rect x="96" y="76.800" width="6.500" height="2.600" fill="#b8c8dc"/><rect x="104" y="76.800" width="2.200" height="2.600" fill="#3a6ab0"/>
    </g>
   </g>
   <!-- Headless Raspberry Pi / Minecraft -->
   <g transform="translate(226,395)" clip-path="url(#c100)">
    <rect width="100" height="80" fill="#c6c8cd"/>
    <g filter="url(#b1)">
     <rect width="100" height="2.500" fill="#d9dadd"/>
     <rect x=".5" y=".3" width="2.400" height="2" fill="#222"/><path d="M4 1.300h3M8.500 1.300h2" stroke="#666" stroke-width=".9"/><path d="M13 1.300h9" stroke="#222" stroke-width="1.600" stroke-dasharray="1.600 .8"/><path d="M24 1.300h9M47 1.300h5M56 1.300h7M66 1.300h10" stroke="#888" stroke-width=".8"/>
     <rect x="38" y=".2" width="16" height="2.200" fill="#3a5a8a"/><rect x="40" y=".6" width="11" height="1.300" fill="#8aa6cc"/>
     <rect x="81" y=".2" width="3" height="2.200" fill="#1a1a2a"/><path d="M85.500 1.300h3M90 1.300h3M95 1.300h4" stroke="#555" stroke-width=".9"/>
     <rect x="2.800" y="4.500" width="2.600" height="3.600" fill="#dcdde0" stroke="#999" stroke-width=".4"/><path d="M1.500 9.500h5.500" stroke="#aaa" stroke-width=".7"/>
     <ellipse cx="46.800" cy="31" rx="3.900" ry="3.300" fill="#58ae2c" transform="rotate(-15 46.800 31)"/><ellipse cx="55.400" cy="31" rx="3.900" ry="3.300" fill="#58ae2c" transform="rotate(15 55.400 31)"/>
     <path d="M44.800 29.800l4.600 2.600M57.400 29.800l-4.600 2.600" stroke="#1f4a10" stroke-width="1.300"/>
     <path d="M48 34.300q3.100-1.600 6.200 0" stroke="#222" stroke-width="1" fill="none"/>
     <rect x="15.800" y="34.700" width="67.200" height="40.200" fill="#2e2722"/>
     <rect x="15.800" y="34.700" width="67.200" height="1.700" fill="#7ea2d2"/>
     <rect x="32.500" y="46.800" width="33.500" height="3.800" fill="#8a8a88"/><path d="M34 48.700h30" stroke="#3a3632" stroke-width="1.800" stroke-dasharray="2.200 .7"/>
     <path d="M41.500 53h5M48.500 53h7" stroke="#b8b8b0" stroke-width="1"/>
     <rect x="30" y="55.800" width="37.500" height="5.200" fill="#7b93c6"/><path d="M43 58.400h11" stroke="#5a6a9a" stroke-width="1"/>
     <rect x="30" y="63" width="37.500" height="5" fill="#787878"/><path d="M43.500 65.500h10" stroke="#9a9a9a" stroke-width="1"/>
     <rect x="16.800" y="72" width="2" height="2" fill="#4a7ad0"/><rect x="19.500" y="72.300" width="4" height="1.500" fill="#d86a2a"/><path d="M68 73h13" stroke="#c8c8c0" stroke-width="1.300" stroke-dasharray="2 .6"/>
    </g>
    <text x="19.700" y="46" font-family="Liberation Sans, sans-serif" font-weight="bold" font-size="10" fill="#bdbdbb" stroke="#bdbdbb" stroke-width=".5" textLength="58.500" lengthAdjust="spacingAndGlyphs" filter="url(#b1)">MINECRAFT</text>
   </g>
   <!-- Home Mac -->
   <g transform="translate(361,401)" clip-path="url(#c120)">
    <rect width="120" height="68" fill="#fdfdfd"/>
    <g filter="url(#b1)">
     <rect x="84" y="0" width="36" height="30" fill="#a9bdd2"/><path d="M84 14l8-6 7 5 8-7 13 9v15H84z" fill="#c8d4e0" opacity=".8"/>
     <rect x="106" y="29" width="14" height="34" fill="#2b3038"/><path d="M100 34l6-5h14v6z" fill="#59636e"/>
     <rect x="84" y="24" width="23" height="36" fill="#fbfbfb"/><path d="M85 27h21M85 30h21M85 33h21M85 36h21M85 39h21M85 42h21M85 45h21M85 48h21M85 51h21M85 54h21" stroke="#e3e5e8" stroke-width=".5"/><path d="M97 27v10M101 27v10" stroke="#bbb" stroke-width=".5"/>
     <g fill="#f4f6f8"><rect x="101" y="6" width="2.600" height="3.200"/><rect x="108" y="6" width="2.600" height="3.200"/><rect x="115" y="6" width="2.600" height="3.200"/><rect x="101" y="16" width="2.600" height="3.200"/><rect x="108" y="16" width="2.600" height="3.200"/><rect x="115" y="16" width="2.600" height="3.200"/><rect x="108" y="26" width="2.600" height="3.200"/><rect x="115" y="26" width="2.600" height="3.200"/><rect x="108" y="36.500" width="2.600" height="3.200"/><rect x="115" y="36.500" width="2.600" height="3.200"/><rect x="108" y="45" width="2.600" height="3.200"/><rect x="115" y="45" width="2.600" height="3.200"/><rect x="108" y="53" width="2.600" height="3.200"/><rect x="115" y="53" width="2.600" height="3.200"/></g>
     <rect x="0" y="0" width="120" height="1.500" fill="#e9e9ea"/><path d="M1 .8h30M100 .8h19" stroke="#555" stroke-width=".8" stroke-dasharray="3 1 2 1.500 4 1"/>
     <rect x="101" y="2.500" width="18" height="3" fill="#eef0f2"/><path d="M103 4h13" stroke="#777" stroke-width=".8"/><rect x="101" y="7" width="18" height="2.600" fill="#eef0f2" opacity=".7"/><path d="M103 8.300h11" stroke="#888" stroke-width=".7"/>
     <rect x="1" y="1.500" width="82" height="59" fill="#fff"/><rect x="1" y="1.500" width="82" height="3" fill="#e6e6e6"/><path d="M38 3h10" stroke="#888" stroke-width=".7"/>
     <rect x="1" y="4.500" width="53" height="2.400" fill="#0d0d0d"/><path d="M3 5.700h8" stroke="#bbb" stroke-width=".8"/>
     <path d="M3 10.500h6M3 13h4M3 15.500h5M4 18h6M4 20.500h5M4 23h5" stroke="#999" stroke-width=".7"/><rect x="24.500" y="13" width="2.600" height="2.200" fill="#e8d44a"/><rect x="26" y="16" width="5" height="10" fill="#b8d0e8" opacity=".8"/>
     <rect x="1" y="26" width="30" height="3" fill="#ededed"/><path d="M2 27.500h10M16 27.500h10" stroke="#aaa" stroke-width=".6"/>
     <rect x="31.500" y="6.600" width="56.500" height="41.600" fill="#f6f6f6" stroke="#c9c9c9" stroke-width=".4"/>
     <rect x="31.500" y="6.600" width="56.500" height="2.800" fill="#ebebeb"/><path d="M33 8h6" stroke="#999" stroke-width=".7"/><circle cx="84.800" cy="8" r=".9" fill="#3cb84a"/>
     <g>
      <rect x="33.500" y="11.600" width="7.200" height="4.600" fill="#e9eef4"/><rect x="37.500" y="12" width="3" height="4" fill="#1f6ac0"/><rect x="43" y="11.600" width="6" height="4.600" fill="#fafafa" stroke="#999" stroke-width=".5"/><rect x="49.300" y="11.800" width="1.200" height="4.400" fill="#222"/>
      <rect x="52" y="12.300" width="7" height="3.400" fill="#0e1a4a"/><rect x="54" y="13.200" width="3" height="1.200" fill="#3a7ad8"/><rect x="61.500" y="11.600" width="6.400" height="4" fill="#fafafa" stroke="#666" stroke-width=".7"/>
      <rect x="70" y="11.600" width="7" height="4.600" fill="#3a4658"/><rect x="72" y="12.800" width="3" height="1.600" fill="#98a8c0"/><rect x="79" y="11.600" width="6.500" height="4.600" fill="#f0f0f0" stroke="#aaa" stroke-width=".4"/><rect x="84" y="12" width="1.200" height="4" fill="#444"/>
      <rect x="34.500" y="20.300" width="6.400" height="4" fill="#fafafa" stroke="#666" stroke-width=".7"/><rect x="43" y="20" width="7" height="4.800" fill="#111"/><rect x="45.500" y="20" width="4.500" height="1.800" fill="#ddd"/>
      <rect x="52" y="20" width="7" height="4.800" fill="#364458"/><rect x="54" y="21.300" width="3" height="1.600" fill="#8fa0b8"/><rect x="61" y="20" width="7" height="4.800" fill="#364458"/><rect x="63" y="21.300" width="3" height="1.600" fill="#8fa0b8"/>
      <rect x="70.500" y="20.300" width="6.400" height="4" fill="#fafafa" stroke="#888" stroke-width=".6"/><rect x="79" y="20" width="7.500" height="4.800" fill="#1fa03a"/><rect x="81.500" y="21.300" width="2.500" height="2" fill="#d8f0dc"/>
      <rect x="43.500" y="29" width="6.400" height="4" fill="#fafafa" stroke="#666" stroke-width=".7"/><rect x="52.500" y="29.500" width="6.400" height="3.400" fill="#fafafa" stroke="#aaa" stroke-width=".5"/><rect x="61.500" y="29" width="6.400" height="4" fill="#fafafa" stroke="#666" stroke-width=".7"/><rect x="70.500" y="29.500" width="6.400" height="3.400" fill="#fafafa" stroke="#bbb" stroke-width=".5"/>
      <rect x="78" y="28" width="9" height="8.500" fill="#d4e6fa"/><rect x="79.500" y="29.500" width="6" height="3.400" fill="#f4f4f4" stroke="#999" stroke-width=".4"/>
      <path d="M35 17.800h4M44 17.800h5M53.500 17.800h4M62 17.800h5M71 17.800h5M80 17.800h5M36 26.500h2.500M45 26.500h3M54.500 26.500h2M62 26.500h4.500M72 26.500h2.500M81 26.500h3M44 35h5.500M54 35h3M63 35h3M72 35h3.500M81 35h3" stroke="#aaa" stroke-width=".6"/>
     </g>
     <rect x="5.200" y="29.600" width="36.400" height="27.200" fill="#050505"/><rect x="5.200" y="29.600" width="36.400" height="1.300" fill="#3a3a3a"/>
     <path d="M6.500 33h24M6.500 35h28M6.500 37h17" stroke="#666" stroke-width=".8" stroke-dasharray="3 1 5 1 2 1"/><path d="M6.500 39.500h15M24 39.500h8M6.500 41.500h17M6.500 43.500h13M6.500 45.500h9M18 45.500h5M6.500 47.500h12M6.500 49.500h16M25 49.500h7M6.500 51.500h14M6.500 53.500h18M27 53.500h5M6.500 55.300h10" stroke="#9a9a9a" stroke-width=".8" stroke-dasharray="2 .8 4 .8 1.500 .8"/>
     <rect x="0" y="60.500" width="120" height="1" fill="#e4e4e4"/><path d="M60 61h22" stroke="#aaa" stroke-width=".6"/>
     <rect x="0" y="61.700" width="120" height="6.300" fill="#b9c0c8"/><rect x="0" y="61.700" width="120" height="6.300" fill="#39404a" opacity=".75"/>
     <g><rect x="6.500" y="62.700" width="3.600" height="4" fill="#3a8ae8"/><rect x="11" y="62.700" width="3.600" height="4" fill="#dfe3e8"/><rect x="15.500" y="62.700" width="3.600" height="4" fill="#2b6ad0"/><rect x="20" y="62.700" width="3.600" height="4" fill="#58626e"/><rect x="24.500" y="62.700" width="3.600" height="4" fill="#c89a4a"/><rect x="29" y="62.700" width="3.600" height="4" fill="#e8e8ec"/><rect x="33.500" y="62.700" width="3.600" height="4" fill="#e8eaee"/><rect x="38" y="62.700" width="3.600" height="4" fill="#7a8088"/><rect x="42.500" y="62.700" width="3.600" height="4" fill="#e8523a"/><rect x="47" y="62.700" width="3.600" height="4" fill="#3a9ae8"/><rect x="51.500" y="62.700" width="3.600" height="4" fill="#38b84a"/><rect x="56" y="62.700" width="3.600" height="4" fill="#5ab0f0"/><rect x="60.500" y="62.700" width="3.600" height="4" fill="#e8703a"/><rect x="65" y="62.700" width="3.600" height="4" fill="#2b7ae0"/><rect x="69.500" y="62.700" width="3.600" height="4" fill="#4a4e58"/><rect x="74" y="62.700" width="3.600" height="4" fill="#9aa0a8"/><rect x="78.500" y="62.700" width="3.600" height="4" fill="#f0f0f2"/><rect x="83" y="62.700" width="3.600" height="4" fill="#5a5e66"/><rect x="87.500" y="62.700" width="3.600" height="4" fill="#e8e8ea"/><rect x="92" y="62.700" width="3.600" height="4" fill="#3a7ad8"/><rect x="96.500" y="62.700" width="3.600" height="4" fill="#e8a83a"/><rect x="101" y="62.700" width="3.600" height="4" fill="#eceef0"/><rect x="105.500" y="62.700" width="3.600" height="4" fill="#f4f4f6"/><rect x="110" y="62.700" width="3.600" height="4" fill="#dadde2"/></g>
     <rect x="0" y="61.700" width="5.500" height="6.300" fill="#2a2e36"/><rect x="115" y="61.700" width="5" height="6.300" fill="#2a2e36"/>
    </g>
   </g>
   <!-- Secure Servers -->
   <g id="mon"><rect x="523" y="403" width="86" height="52" fill="#fff" stroke="#808080" stroke-width="6"/><path d="M544.300 460.500H587.300V463.500Q587.300 467 578 468.600Q566 470.600 553.500 468.600Q544.300 467 544.300 463.500Z" fill="#808080"/></g>
   <use href="#mon" x="145"/>
  </svg>
  <span class="lbl" style="left:195.3px;top:184px;letter-spacing:-0.3px">Family Computer</span>
  <span class="lbl" style="left:340.3px;top:184px;letter-spacing:-0.6px">Robo-Raspberry Pi</span>
  <span class="lbl" style="left:485.3px;top:184px;letter-spacing:-0.62px">Parents' PC</span>
  <span class="lbl" style="left:630.3px;top:184px">Laptop</span>
  <span class="lbl" style="left:195.3px;top:320px">Work Fedora</span>
  <span class="lbl" style="left:340.3px;top:320px;letter-spacing:-0.21px">Ubuntu Virtual</span>
  <span class="lbl" style="left:485.3px;top:320px;letter-spacing:-0.2px">Ubuntu Laptop</span>
  <span class="lbl" style="left:630.3px;top:320px;letter-spacing:-0.93px">192.167.4.32:1</span>
  <span class="lbl" style="left:195.3px;top:456px;letter-spacing:-0.66px">Headless Raspberry Pi</span>
  <span class="lbl" style="left:340.3px;top:456px">Home Mac</span>
  <span class="lbl" style="left:485.3px;top:456px;letter-spacing:-0.89px">Secure Server 1</span>
  <span class="lbl" style="left:630.3px;top:456px;letter-spacing:-0.85px">Secure Server 2</span>
 </div>
</div>
</body>
</html>
